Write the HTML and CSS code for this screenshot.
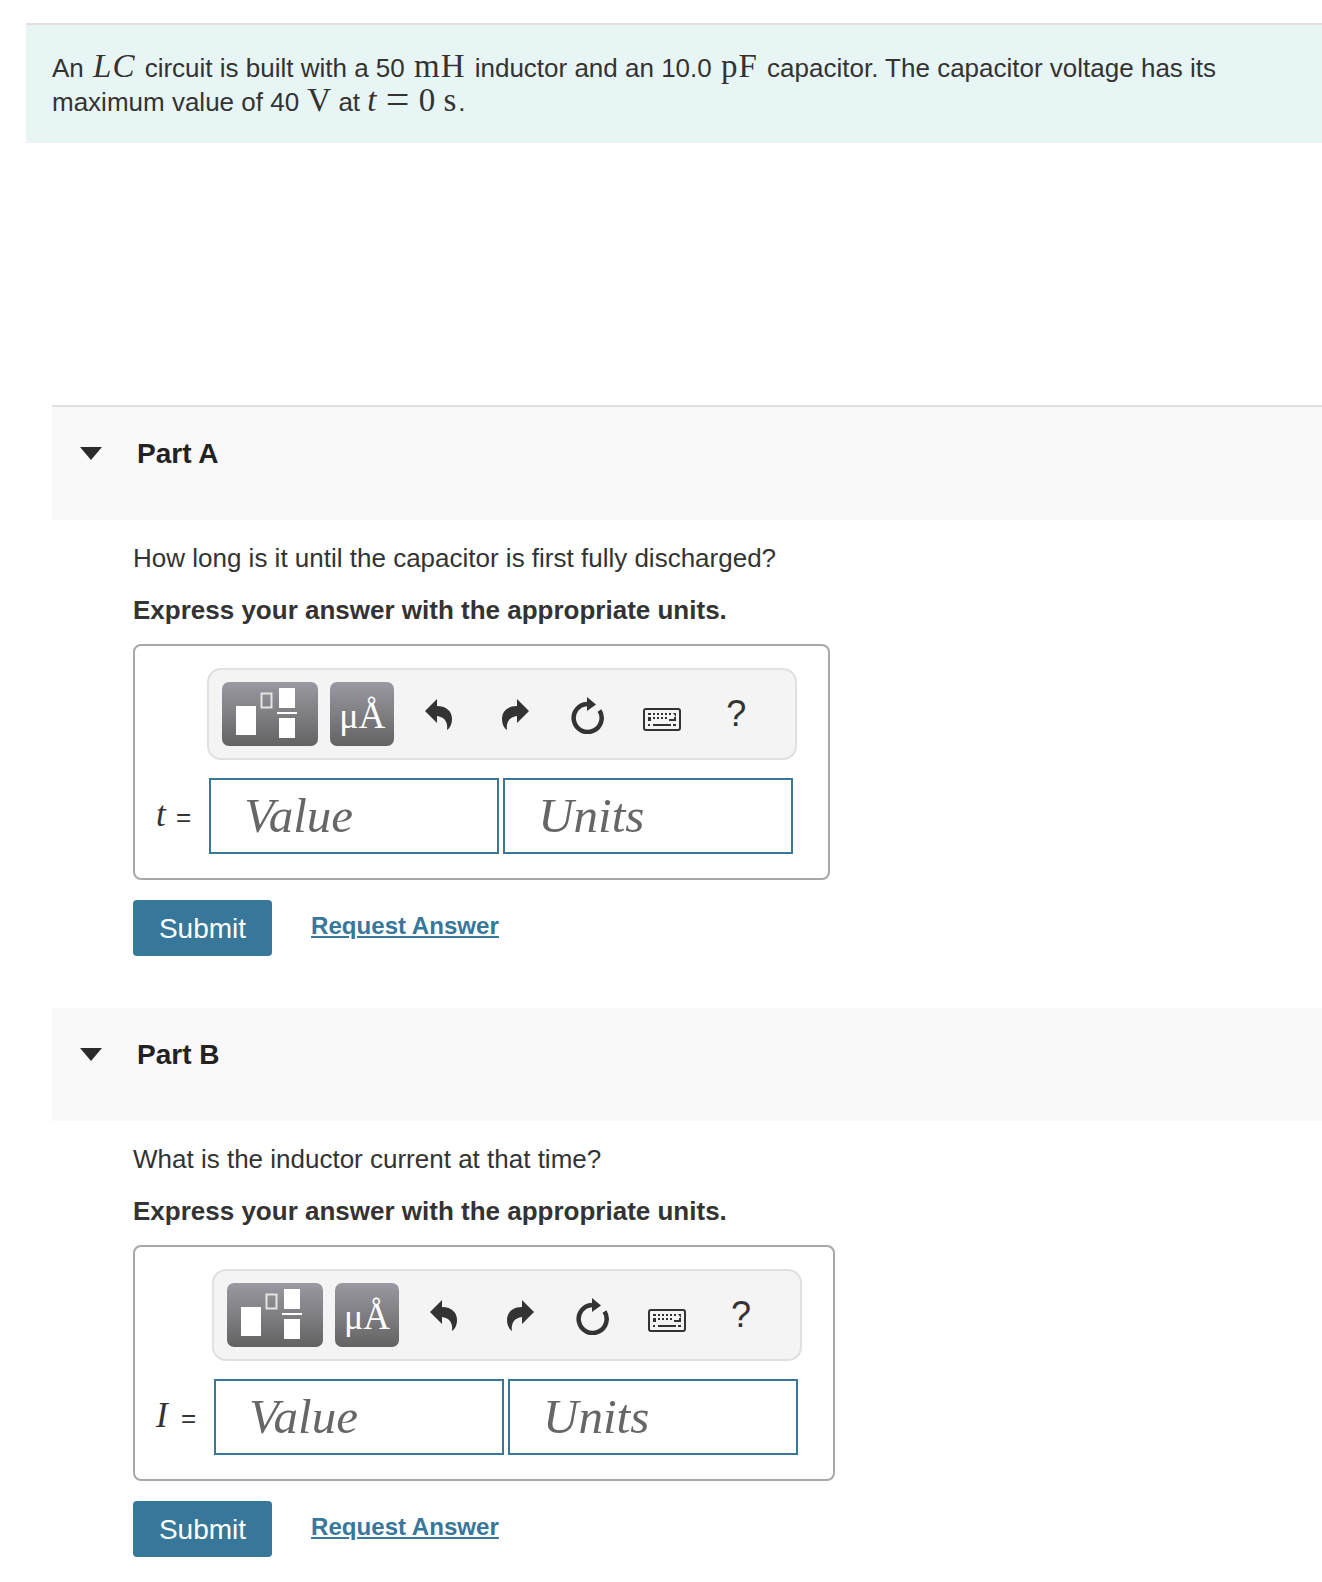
FILE: index.html
```html
<!DOCTYPE html>
<html lang="en">
<head>
    <meta charset="UTF-8">
    <title>LC circuit</title>
    <link rel="stylesheet" href="styles.css">
</head>
<body>
    <svg class="defs" width="0" height="0">
        <defs>
            <linearGradient id="btn-grad" x1="0" y1="0" x2="0" y2="1">
                <stop offset="0" stop-color="#9b99a1"/>
                <stop offset="1" stop-color="#636363"/>
            </linearGradient>
            <symbol id="i-templates" viewBox="0 0 96 64">
                <rect width="96" height="64" rx="7" fill="url(#btn-grad)"/>
                <rect x="14" y="24" width="20" height="29" fill="#fff"/>
                <rect x="39.5" y="11.5" width="10" height="14" fill="none" stroke="#e4e4e4" stroke-width="2"/>
                <rect x="57" y="6" width="16" height="20" fill="#fff"/>
                <rect x="55" y="30" width="20" height="2" fill="#fff"/>
                <rect x="57" y="36" width="16" height="20" fill="#fff"/>
            </symbol>
            <symbol id="i-undo" viewBox="0 0 27 31">
                <path d="M0 12 12 0V7C22 7 27 13 27 20 27 25 25 29 22 31 23 25 21 18 12 17V24Z" fill="#333"/>
            </symbol>
            <symbol id="i-reload" viewBox="0 0 34 37">
                <path d="M17 7A14 14 0 1 0 29.5 13.5" fill="none" stroke="#333" stroke-width="4.5"/>
                <path d="M17 0 26 7.5 17 14Z" fill="#333"/>
            </symbol>
            <symbol id="i-keyboard" viewBox="0 0 38 23">
                <rect x="1" y="1" width="36" height="21" rx="2" fill="none" stroke="#333" stroke-width="2"/>
                <path d="M5 5h3v2H5zM10 5h2v2h-2zM14 5h2v2h-2zM18 5h2v2h-2zM22 5h2v2h-2zM26 5h2v2h-2zM30 5h3v8h-7v-2h5V9h2zM5 9h3v4H5zM10 9h2v2h-2zM14 9h2v2h-2zM18 9h2v2h-2zM22 9h2v2h-2zM5 16h2v2H5zM10 16h18v2H10zM30 16h3v2h-3z" fill="#333"/>
            </symbol>
        </defs>
    </svg>

    <section class="intro">
        <p>An <i class="m big wide">LC</i> circuit is built with a 50 <span class="m big wide">mH</span> inductor and an 10.0 <span class="m big wide">pF</span> capacitor. The capacitor voltage has its maximum value of 40 <span class="m big wide volt">V</span> at <i class="m big time">t</i> <span class="m eq">=</span> <span class="m big">0 s</span>.</p>
    </section>

    <section class="part part-a">
        <header class="part-head">
            <span class="caret"></span>
            <h2>Part A</h2>
        </header>
        <div class="part-body">
            <p class="question">How long is it until the capacitor is first fully discharged?</p>
            <p class="instruct">Express your answer with the appropriate units.</p>
            <div class="answer-box">
                <span class="var"><i>t</i> =</span>
                <div class="answer-main">
                    <div class="toolbar">
                        <svg class="tool-tpl"><use href="#i-templates"/></svg>
                        <span class="tool-units"><span class="mu">μ</span>Å</span>
                        <svg class="tool-undo"><use href="#i-undo"/></svg>
                        <svg class="tool-redo"><use href="#i-undo"/></svg>
                        <svg class="tool-reload"><use href="#i-reload"/></svg>
                        <svg class="tool-kbd"><use href="#i-keyboard"/></svg>
                        <span class="tool-help">?</span>
                    </div>
                    <div class="inputs">
                        <div class="field">Value</div>
                        <div class="field">Units</div>
                    </div>
                </div>
            </div>
            <div class="actions">
                <button class="submit">Submit</button>
                <a class="request" href="#">Request Answer</a>
            </div>
        </div>
    </section>

    <section class="part part-b">
        <header class="part-head">
            <span class="caret"></span>
            <h2>Part B</h2>
        </header>
        <div class="part-body">
            <p class="question">What is the inductor current at that time?</p>
            <p class="instruct">Express your answer with the appropriate units.</p>
            <div class="answer-box">
                <span class="var"><i>I</i> =</span>
                <div class="answer-main">
                    <div class="toolbar">
                        <svg class="tool-tpl"><use href="#i-templates"/></svg>
                        <span class="tool-units"><span class="mu">μ</span>Å</span>
                        <svg class="tool-undo"><use href="#i-undo"/></svg>
                        <svg class="tool-redo"><use href="#i-undo"/></svg>
                        <svg class="tool-reload"><use href="#i-reload"/></svg>
                        <svg class="tool-kbd"><use href="#i-keyboard"/></svg>
                        <span class="tool-help">?</span>
                    </div>
                    <div class="inputs">
                        <div class="field">Value</div>
                        <div class="field">Units</div>
                    </div>
                </div>
            </div>
            <div class="actions">
                <button class="submit">Submit</button>
                <a class="request" href="#">Request Answer</a>
            </div>
        </div>
    </section>
</body>
</html>
```

FILE: styles.css
```css
body {
    font-family: "Liberation Sans", Arial, sans-serif;
    font-size: 26px;
    color: #333;
    background: #fff;
    margin: 0;
    padding: 23px 0 0 26px;
    overflow-x: hidden;
}
p {
    margin: 0;
}
.defs {
    position: absolute;
}
.intro {
    background: #e8f5f5;
    border-top: 2px solid #e0e0e0;
    padding: 26px 26px 24px;
    height: 68px;
}
.intro p {
    line-height: 34px;
    max-width: 1220px;
}
.m {
    font-family: "Liberation Serif", "Times New Roman", serif;
    line-height: 0;
}
.big {
    font-size: 33px;
    margin: 0 2px;
}
.wide {
    letter-spacing: 1px;
}
.volt {
    margin: 0 -1px 0 1px;
}
.time {
    margin: 0 3px 0 0;
}
.eq {
    font-size: 42px;
    vertical-align: -2px;
    margin: 0 0 0 -1px;
}
.part {
    margin-left: 26px;
}
.part-a {
    margin-top: 262px;
}
.part-b {
    margin-top: 52px;
}
.part-a .part-head {
    border-top: 2px solid #e0e0e0;
}
.part-head {
    background: #f9f9f9;
    height: 113px;
    display: flex;
    align-items: flex-start;
}
.caret {
    width: 0;
    height: 0;
    border-left: 11px solid transparent;
    border-right: 11px solid transparent;
    border-top: 13px solid #2b2b2b;
    margin: 40px 0 0 28px;
}
.part-head h2 {
    font-size: 28px;
    line-height: 32px;
    margin: 31px 0 0 35px;
    color: #222;
}
.part-body {
    padding: 21px 0 0 81px;
}
.question {
    line-height: 34px;
}
.instruct {
    font-weight: bold;
    line-height: 34px;
    margin-top: 18px;
}
.answer-box {
    display: inline-flex;
    align-items: flex-end;
    border: 2px solid #a8a8a8;
    border-radius: 8px;
    padding: 22px 31px 24px 21px;
    margin-top: 17px;
}
.var {
    font-size: 26px;
    line-height: 74px;
    margin-right: 18px;
    white-space: nowrap;
    word-spacing: 3px;
}
.var i {
    font-family: "Liberation Serif", serif;
    font-size: 35px;
}
.part-b .var i {
    margin-right: 3px;
}
.toolbar {
    width: 586px;
    height: 88px;
    margin-left: -2px;
    background: #f4f4f4;
    border: 2px solid #e0e0e0;
    border-radius: 14px;
    display: flex;
    align-items: center;
}
.toolbar svg {
    flex: none;
    display: block;
}
.tool-tpl {
    width: 96px;
    height: 64px;
    margin-left: 13px;
}
.tool-units {
    width: 64px;
    height: 64px;
    margin-left: 12px;
    border-radius: 7px;
    background: linear-gradient(#9b99a1, #636363);
    color: #fff;
    font-family: "Liberation Serif", serif;
    font-size: 37px;
    line-height: 68px;
    text-align: center;
    overflow: hidden;
}
.mu {
    font-size: 36px;
}
.tool-undo {
    width: 27px;
    height: 31px;
    margin-left: 31px;
}
.tool-redo {
    width: 27px;
    height: 31px;
    margin-left: 50px;
    transform: scaleX(-1);
}
.tool-reload {
    width: 34px;
    height: 37px;
    margin-left: 41px;
    margin-top: 2px;
}
.tool-kbd {
    width: 38px;
    height: 23px;
    margin-left: 39px;
    margin-top: 11px;
}
.tool-help {
    font-size: 36px;
    margin-left: 45px;
    margin-top: 0;
}
.inputs {
    display: flex;
    gap: 4px;
    margin-top: 18px;
}
.field {
    width: 286px;
    height: 72px;
    border: 2px solid #37779a;
    font-family: "Liberation Serif", serif;
    font-style: italic;
    font-size: 49px;
    line-height: 72px;
    color: #666;
    text-indent: 33px;
}
.actions {
    display: flex;
    align-items: flex-start;
    margin-top: 20px;
}
.submit {
    width: 139px;
    height: 56px;
    background: #37779a;
    color: #fff;
    border: none;
    border-radius: 4px;
    font-family: "Liberation Sans", sans-serif;
    font-size: 28px;
    padding: 2px 0 0;
}
.request {
    color: #37779a;
    font-weight: bold;
    font-size: 24.1px;
    margin: 12px 0 0 39px;
}
```
